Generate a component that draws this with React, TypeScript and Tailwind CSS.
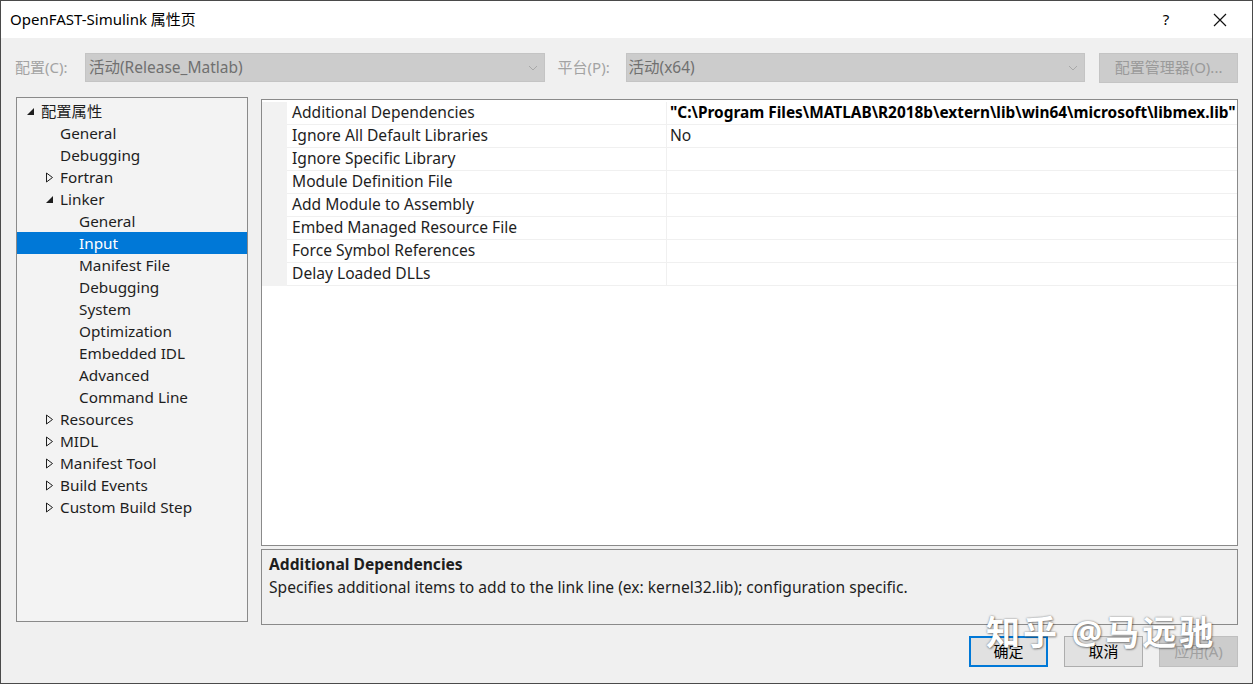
import React from "react";

type TreeItem = { label: string; level: number; arrow?: "open" | "closed"; selected?: boolean };

const treeItems: TreeItem[] = [
  { label: "配置属性", level: 0, arrow: "open" },
  { label: "General", level: 1 },
  { label: "Debugging", level: 1 },
  { label: "Fortran", level: 1, arrow: "closed" },
  { label: "Linker", level: 1, arrow: "open" },
  { label: "General", level: 2 },
  { label: "Input", level: 2, selected: true },
  { label: "Manifest File", level: 2 },
  { label: "Debugging", level: 2 },
  { label: "System", level: 2 },
  { label: "Optimization", level: 2 },
  { label: "Embedded IDL", level: 2 },
  { label: "Advanced", level: 2 },
  { label: "Command Line", level: 2 },
  { label: "Resources", level: 1, arrow: "closed" },
  { label: "MIDL", level: 1, arrow: "closed" },
  { label: "Manifest Tool", level: 1, arrow: "closed" },
  { label: "Build Events", level: 1, arrow: "closed" },
  { label: "Custom Build Step", level: 1, arrow: "closed" },
];

const props: { name: string; value: string; bold?: boolean }[] = [
  {
    name: "Additional Dependencies",
    value: '"C:\\Program Files\\MATLAB\\R2018b\\extern\\lib\\win64\\microsoft\\libmex.lib"',
    bold: true,
  },
  { name: "Ignore All Default Libraries", value: "No" },
  { name: "Ignore Specific Library", value: "" },
  { name: "Module Definition File", value: "" },
  { name: "Add Module to Assembly", value: "" },
  { name: "Embed Managed Resource File", value: "" },
  { name: "Force Symbol References", value: "" },
  { name: "Delay Loaded DLLs", value: "" },
];

function Arrow({ kind }: { kind: "open" | "closed" }) {
  if (kind === "open") {
    return (
      <svg width="9" height="9" viewBox="0 0 9 9">
        <path d="M8 1 L8 8 L1 8 Z" fill="#1e1e1e" />
      </svg>
    );
  }
  return (
    <svg width="9" height="11" viewBox="0 0 9 11">
      <path d="M1.5 1 L7.5 5.5 L1.5 10 Z" fill="none" stroke="#1e1e1e" strokeWidth="1" />
    </svg>
  );
}

function Chevron() {
  return (
    <svg width="10" height="6" viewBox="0 0 10 6" className="shrink-0">
      <path d="M1 1 L5 5 L9 1" fill="none" stroke="#a8a8a8" strokeWidth="1" />
    </svg>
  );
}

export default function App() {
  return (
    <div
      className="relative w-[1253px] h-[684px] bg-[#f0f0f0] border border-[#4a4a4a] flex flex-col text-[15px] text-[#1e1e1e] overflow-hidden"
      style={{ fontFamily: '"Noto Sans", "Noto Sans CJK SC", sans-serif' }}
    >
      {/* title bar */}
      <div className="h-[37px] bg-white flex items-center shrink-0">
        <span className="pl-[9px] text-[15px] text-black">OpenFAST-Simulink 属性页</span>
        <div className="ml-auto flex items-center">
          <span className="w-[46px] text-center text-[15px] text-black mr-[3px]">?</span>
          <span className="w-[56px] flex justify-center mr-[4px]">
            <svg width="14" height="14" viewBox="0 0 14 14">
              <path d="M1 1 L13 13 M13 1 L1 13" stroke="#111" strokeWidth="1.2" />
            </svg>
          </span>
        </div>
      </div>

      {/* config row */}
      <div className="flex items-center mt-[15px] h-[29px] pl-[14px] pr-[14px] shrink-0">
        <span className="w-[70px] text-[#a3a3a3]">配置(C):</span>
        <div className="w-[460px] h-[29px] bg-[#cccccc] border border-[#c4c4c4] flex items-center pl-[3px] pr-[6px]">
          <span className="text-[#707070] flex-1 text-[15.5px]">活动(Release_Matlab)</span>
          <Chevron />
        </div>
        <span className="ml-[13px] w-[68px] text-[#a3a3a3]">平台(P):</span>
        <div className="w-[460px] h-[29px] bg-[#cccccc] border border-[#c4c4c4] flex items-center pl-[2px] pr-[6px]">
          <span className="text-[#707070] flex-1 text-[15.5px]">活动(x64)</span>
          <Chevron />
        </div>
        <div className="ml-[14px] w-[139px] h-[30px] bg-[#cccccc] border border-[#c4c4c4] flex items-center justify-center text-[#9a9a9a]">
          配置管理器(O)...
        </div>
      </div>

      {/* main */}
      <div className="flex mt-[15px] pl-[15px] pr-[14px] shrink-0">
        {/* tree */}
        <div className="w-[232px] h-[525px] border border-[#8a8a8a] bg-[#f3f3f3] pt-[2px] shrink-0 text-[15.3px]">
          {treeItems.map((it, i) => (
            <div
              key={i}
              className={`h-[22px] flex items-center ${it.selected ? "bg-[#0078d7] text-white" : ""}`}
            >
              <span
                className={`flex items-center justify-start shrink-0 ${
                  it.level === 0 ? "ml-[9px] w-[15px]" : it.level === 1 ? "ml-[28px] w-[15px]" : "ml-[47px] w-[15px]"
                }`}
              >
                {it.arrow && <Arrow kind={it.arrow} />}
              </span>
              <span className="whitespace-nowrap">{it.label}</span>
            </div>
          ))}
        </div>

        {/* right column */}
        <div className="ml-[13px] flex-1 flex flex-col">
          <div className="mt-[2px] h-[447px] border border-[#8a8a8a] bg-white pt-[2px] text-[15.6px]">
            {props.map((p, i) => (
              <div key={i} className="h-[23px] flex">
                <div className="w-[25px] bg-[#f2f2f2] shrink-0" />
                <div className="w-[380px] shrink-0 border-b border-r border-[#f0f0f0] flex items-center pl-[5px] whitespace-nowrap">
                  {p.name}
                </div>
                <div
                  className={`flex-1 border-b border-[#f0f0f0] flex items-center pl-[3px] whitespace-nowrap ${
                    p.bold ? "font-bold text-black text-[15.4px]" : ""
                  }`}
                >
                  {p.value}
                </div>
              </div>
            ))}
          </div>
          <div className="mt-[3px] h-[76px] border border-[#8a8a8a] bg-[#f0f0f0] px-[7px] pt-[4px] text-[15.6px]">
            <div className="font-bold h-[22px] flex items-center">Additional Dependencies</div>
            <div className="h-[24px] flex items-center whitespace-nowrap">
              Specifies additional items to add to the link line (ex: kernel32.lib); configuration specific.
            </div>
          </div>
        </div>
      </div>

      {/* buttons */}
      <div className="flex justify-end gap-[16px] pr-[14px] mt-[11px]">
        <button className="w-[79px] h-[31px] border-2 border-[#0078d7] bg-[#e1e1e1] text-black">确定</button>
        <button className="w-[79px] h-[31px] border border-[#adadad] bg-[#e1e1e1] text-black">取消</button>
        <button className="w-[79px] h-[31px] border border-[#bfbfbf] bg-[#cccccc] text-[#a0a0a0]">应用(A)</button>
      </div>

      {/* watermark */}
      <div
        className="absolute left-[985px] top-[606px] text-[34px] font-bold text-white whitespace-nowrap tracking-[3px]"
        style={{ textShadow: "0 0 2px rgba(0,0,0,0.5), 1px 1px 2px rgba(0,0,0,0.35)" }}
      >
        知乎 @马远驰
      </div>
    </div>
  );
}
